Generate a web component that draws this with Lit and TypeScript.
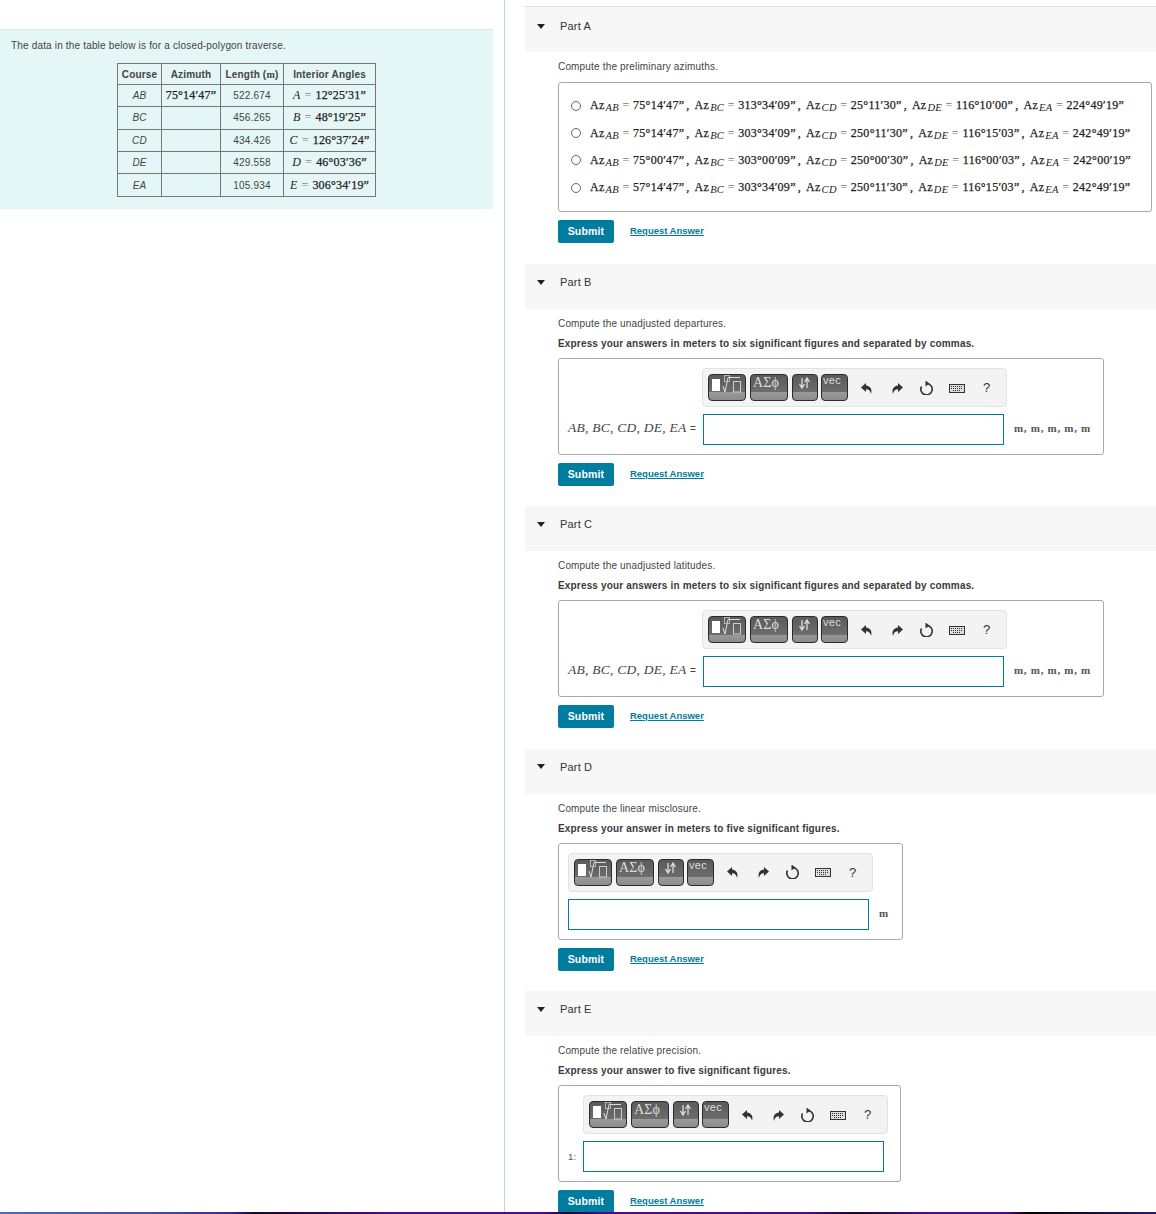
import { LitElement, html, css, svg } from "lit";
import { customElement } from "lit/decorators.js";

const az = (sub: string, val: string) => html`<span class="az">Az<i>${sub}</i></span><span class="eq">=</span>${val}`;

const OPTIONS = [
  ["75°14′47”", "313°34′09”", "25°11′30”", "116°10′00”", "224°49′19”"],
  ["75°14′47”", "303°34′09”", "250°11′30”", "116°15′03”", "242°49′19”"],
  ["75°00′47”", "303°00′09”", "250°00′30”", "116°00′03”", "242°00′19”"],
  ["57°14′47”", "303°34′09”", "250°11′30”", "116°15′03”", "242°49′19”"],
];
const SUBS = ["AB", "BC", "CD", "DE", "EA"];

const ROWS = [
  ["AB", "75°14′47”", "522.674", "A", "12°25′31”"],
  ["BC", "", "456.265", "B", "48°19′25”"],
  ["CD", "", "434.426", "C", "126°37′24”"],
  ["DE", "", "429.558", "D", "46°03′36”"],
  ["EA", "", "105.934", "E", "306°34′19”"],
];

const undoIcon = svg`<path d="M6 2 1 6.500 6 11V8.200c3 0 4.500 1.500 5 4.800 1.500-4.500-.5-8-5-8.500z" fill="#333"/>`;
const redoIcon = svg`<path d="M8 2l5 4.500L8 11V8.200c-3 0-4.500 1.500-5 4.800-1.500-4.500.5-8 5-8.500z" fill="#333"/>`;
const resetIcon = svg`<path d="M7.500 2.500a5.700 5.700 0 1 1-5 3" fill="none" stroke="#333" stroke-width="1.600"/><path d="M6.500 -.5v6l4-3z" fill="#333"/>`;

@customElement("app-root")
export class AppRoot extends LitElement {
  static styles = css`
    :host {
      display: block;
      position: relative;
      height: 1214px;
      overflow: hidden;
      background: #fff;
      font-family: "Liberation Sans", Arial, sans-serif;
      color: #444;
      font-size: 10px;
      letter-spacing: .17px;
    }
    .page { display: flex; height: 1212px; }
    .left { width: 504px; border-right: 1px solid #c5d3df; flex: none; padding-top: 29px; }
    .intro {
      width: 493px;
      height: 180px;
      box-sizing: border-box;
      background: #e5f6f6;
      border-top: 1px solid #e0e4e4;
      padding: 11px 11px 0;
    }
    .intro p { margin: 0 0 12px; line-height: 10px; }
    table { border-collapse: collapse; margin-left: 106px; table-layout: fixed; width: 259px; }
    td, th { border: 1px solid #777; text-align: center; padding: 0; color: #444; }
    th { height: 20px; font-size: 10px; font-weight: 700; }
    th .m { font-family: "Liberation Serif", serif; }
    td { height: 21.300px; font-weight: 400; font-size: 10px; }
    tr:last-child td { height: 22.300px; }
    td.course { font-style: italic; }
    .math {
      font-family: "Liberation Serif", serif;
      font-size: 12px;
      color: #222;
      -webkit-text-stroke: .25px #222;
      letter-spacing: .2px;
      white-space: nowrap;
    }
    .math i { -webkit-text-stroke: 0; }
    .math .eq { color: #888; -webkit-text-stroke: 0; margin: 0 4px; }
    .right { flex: 1; padding: 7px 0 0 20px; min-width: 0; }
    .part-head {
      height: 45px;
      background: #f7f7f7;
      box-sizing: border-box;
      display: flex;
      align-items: center;
      gap: 15px;
      padding: 0 0 9px 12px;
      color: #333;
      font-size: 11px;
    }
    .part-head.first { box-shadow: 0 -1px 0 #e0e0e0; padding-bottom: 7px; }
    .caret { width: 0; height: 0; border: 4px solid transparent; border-top: 5px solid #222; border-bottom: 0; }
    .body { padding: 10px 0 0 33px; }
    .body p { margin: 0; line-height: 10px; }
    .body p.bold { font-weight: 700; margin-top: 10px; color: #3a3a3a; }
    .options {
      margin-top: 10px;
      width: 594px;
      height: 130px;
      box-sizing: border-box;
      border: 1px solid #a8a8a8;
      border-radius: 3px;
      padding: 9px 0 0 12px;
    }
    .opt { display: flex; align-items: center; height: 27.400px; }
    .radio { width: 8px; height: 8px; border: 1px solid #666; border-radius: 50%; margin-right: 9px; flex: none; }
    .formula {
      font-family: "Liberation Serif", serif;
      font-size: 12px;
      color: #222;
      -webkit-text-stroke: .25px #222;
      letter-spacing: .28px;
      white-space: nowrap;
    }
    .formula .az i { font-size: 10.500px; -webkit-text-stroke: 0; position: relative; top: 2px; margin-left: 1px; }
    .formula .eq { color: #777; -webkit-text-stroke: 0; margin: 0 3.500px; }
    .formula .sep { margin: 0 5px 0 2px; }
    .actions { display: flex; align-items: center; gap: 16px; margin-top: 8px; }
    .submit {
      width: 56px;
      height: 23px;
      box-sizing: border-box;
      padding-bottom: 1px;
      background: #007c9e;
      color: #fff;
      border-radius: 2px;
      font-weight: 700;
      font-size: 10.500px;
      display: flex;
      align-items: center;
      justify-content: center;
    }
    .req { color: #007c9e; text-decoration: underline; font-weight: 700; font-size: 9.500px; letter-spacing: -.02px; margin-bottom: 2px; }
    .box {
      border: 1px solid #a8a8a8;
      border-radius: 3px;
      box-sizing: border-box;
      margin-top: 9px;
      padding: 9px 12px 0 9px;
      height: 97px;
    }
    .box.wide { width: 546px; }
    .box.mid { width: 345px; }
    .box.small { width: 343px; }
    .toolbar {
      width: 305px;
      height: 39px;
      box-sizing: border-box;
      background: #f3f3f3;
      border: 1px solid #e2e2e2;
      border-radius: 4px;
      display: flex;
      align-items: center;
      padding: 0 0 0 5px;
      gap: 4px;
    }
    .wide .toolbar { margin-left: 134px; }
    .small .toolbar { margin-left: 15px; }
    .tool {
      height: 27px;
      box-sizing: border-box;
      border: 1px solid #2b2b2b;
      border-radius: 4px;
      background: linear-gradient(#5a5a5a 0, #6d6d6d 70%, #999 70%, #8c8c8c 100%);
      color: #ddd;
      position: relative;
      overflow: hidden;
      display: flex;
      justify-content: center;
      padding-top: 1px;
    }
    .tool svg { position: absolute; top: 0; left: 0; }
    .t1 { width: 38px; }
    .t2 { width: 38px; box-sizing: border-box; padding-right: 6px; font-family: "Liberation Serif", serif; font-size: 14px; line-height: 14px; }
    .t3 { width: 26px; margin-right: -1px; }
    .t4 { width: 27px; font-size: 11px; line-height: 9px; justify-content: flex-start; padding-left: 1px; letter-spacing: .3px; }
    .icons { display: flex; align-items: center; margin-left: 8px; gap: 15.500px; color: #333; }
    .icons svg { width: 14px; height: 14px; display: block; }
    .icons .q { font-size: 13px; margin-left: 3px; }
    .answer { display: flex; align-items: center; margin-top: 7px; }
    .label { font-family: "Liberation Serif", serif; font-style: italic; font-size: 13.500px; color: #444; width: 135px; white-space: nowrap; letter-spacing: .25px; margin-bottom: 3px; }
    .label b { font-style: normal; font-weight: 400; font-family: "Liberation Sans", sans-serif; font-size: 10px; }
    .input { height: 31px; width: 301px; box-sizing: border-box; border: 1px solid #007c9e; background: #fff; }
    .unit { font-family: "Liberation Serif", serif; font-weight: 700; font-size: 11px; color: #555; margin: 0 0 3px 10px; white-space: nowrap; letter-spacing: .7px; }
    .num { width: 15px; color: #555; font-size: 9.500px; }
    .bottom {
      position: absolute;
      left: 0;
      right: 0;
      bottom: 0;
      height: 2px;
      background: linear-gradient(90deg, #4a6cb5 0, #46489f 14%, #3b2a8e 20%, #120a2a 22%, #4b0a8c 34%, #4b0a8c 47%, #16062c 49%, #4b0a8c 52%, #470b85 70%, #14082a 74%, #4b0a8c 80%, #4b0a8c 87%, #000 89%, #2e1b6e 100%);
    }
  `;

  private mathCell(letter: string, val: string) {
    return html`<span class="math"><i>${letter}</i><span class="eq">=</span>${val}</span>`;
  }

  private toolbar() {
    return html`<div class="toolbar">
      <div class="tool t1">
        <svg width="36" height="25" viewBox="0 0 36 25">
          <rect x="3" y="4" width="8" height="12" fill="#fff"/>
          <path d="M14 11l2 6 3-14.500h12" fill="none" stroke="#ddd" stroke-width="1"/>
          <rect x="15.500" y=".5" width="5" height="6" fill="none" stroke="#ccc" stroke-width=".8"/>
          <rect x="24.500" y="6.500" width="7" height="10.500" fill="none" stroke="#ccc"/>
        </svg>
      </div>
      <div class="tool t2">ΑΣϕ</div>
      <div class="tool t3">
        <svg width="24" height="25" viewBox="0 0 24 25">
          <path d="M9 3v9M6.500 9 9 13l2.500-4M14 13V4M11.500 7 14 3l2.500 4" fill="none" stroke="#ddd" stroke-width="1.300"/>
        </svg>
      </div>
      <div class="tool t4">vec</div>
      <div class="icons">
        <svg viewBox="0 0 14 14">${undoIcon}</svg>
        <svg viewBox="0 0 14 14">${redoIcon}</svg>
        <svg viewBox="0 0 14 14">${resetIcon}</svg>
        <svg viewBox="0 0 16 14" style="width:16px">
          <rect x=".5" y="3.500" width="15" height="8" fill="#ddd" stroke="#333"/>
          <path d="M2 5.500h12M2 7.500h12M4 9.500h8" stroke="#333" stroke-dasharray="1 1"/>
        </svg>
        <span class="q">?</span>
      </div>
    </div>`;
  }

  private actions() {
    return html`<div class="actions"><div class="submit">Submit</div><span class="req">Request Answer</span></div>`;
  }

  private head(name: string, first = false) {
    return html`<div class="part-head ${first ? "first" : ""}"><span class="caret"></span>${name}</div>`;
  }

  private part(name: string, p1: string, p2: string, kind: string, pre: unknown, post: unknown) {
    return html`
      ${this.head(name)}
      <div class="body">
        <p>${p1}</p>
        <p class="bold">${p2}</p>
        <div class="box ${kind}">
          ${this.toolbar()}
          <div class="answer">${pre}<div class="input"></div>${post}</div>
        </div>
        ${this.actions()}
      </div>
      <div style="height:20.400px"></div>
    `;
  }

  render() {
    const multi = html`<span class="label">AB, BC, CD, DE, EA <b>=</b></span>`;
    const mUnit = html`<span class="unit">m, m, m, m, m</span>`;
    return html`
      <div class="page">
        <div class="left">
          <div class="intro">
            <p>The data in the table below is for a closed-polygon traverse.</p>
            <table>
              <colgroup><col style="width:44px"/><col style="width:59px"/><col style="width:63px"/><col style="width:92px"/></colgroup>
              <tr><th>Course</th><th>Azimuth</th><th>Length (<span class="m">m</span>)</th><th>Interior Angles</th></tr>
              ${ROWS.map((r) => html`<tr>
                <td class="course">${r[0]}</td>
                <td><span class="math">${r[1]}</span></td>
                <td>${r[2]}</td>
                <td>${this.mathCell(r[3], r[4])}</td>
              </tr>`)}
            </table>
          </div>
        </div>
        <div class="right">
          ${this.head("Part A", true)}
          <div class="body">
            <p>Compute the preliminary azimuths.</p>
            <div class="options">
              ${OPTIONS.map((o) => html`<div class="opt"><span class="radio"></span><span class="formula">
                ${o.map((v, i) => html`${az(SUBS[i], v)}${i < 4 ? html`<span class="sep">,</span>` : ""}`)}
              </span></div>`)}
            </div>
            ${this.actions()}
          </div>
          <div style="height:21px"></div>
          ${this.part("Part B", "Compute the unadjusted departures.", "Express your answers in meters to six significant figures and separated by commas.", "wide", multi, mUnit)}
          ${this.part("Part C", "Compute the unadjusted latitudes.", "Express your answers in meters to six significant figures and separated by commas.", "wide", multi, mUnit)}
          ${this.part("Part D", "Compute the linear misclosure.", "Express your answer in meters to five significant figures.", "mid", "", html`<span class="unit">m</span>`)}
          ${this.part("Part E", "Compute the relative precision.", "Express your answer to five significant figures.", "small", html`<span class="num">1:</span>`, "")}
        </div>
      </div>
      <div class="bottom"></div>
    `;
  }
}
